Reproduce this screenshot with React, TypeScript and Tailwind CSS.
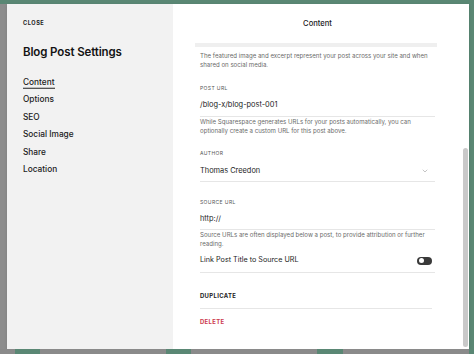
import { ChevronDown } from 'lucide-react'

const NAV = ['Content', 'Options', 'SEO', 'Social Image', 'Share', 'Location']

function Label({ text, className = '' }: { text: string; className?: string }) {
  return (
    <div className={`h-[8px] leading-[8px] text-[5px] tracking-[0.08em] uppercase text-[#555] ${className}`}>{text}</div>
  )
}

function Helper({ children }: { children: React.ReactNode }) {
  return <p className="text-[6.1px] leading-[9px] text-[#6a6a6a] pr-[4px]">{children}</p>
}

export default function App() {
  return (
    <div className="w-[474px] h-[354px] bg-[#5a8774] flex flex-col overflow-hidden" style={{ fontFamily: 'Inter, "Liberation Sans", sans-serif' }}>
      <div className="h-[4px] shrink-0" />
      <div className="flex h-[345px] shrink-0">
        <div className="w-[7px] bg-[#8d8d8d]" />
        {/* modal */}
        <div className="w-[462px] flex shadow-sm">
          {/* left nav */}
          <aside className="w-[166px] bg-[#f2f2f2] pl-[16px]">
            <div className="h-[36px] pt-[2px] flex items-center text-[5.6px] font-bold tracking-[0.1em] text-[#222]">CLOSE</div>
            <h1 className="mt-[5px] h-[14px] leading-[14px] text-[11.5px] font-semibold text-[#141414] tracking-[-0.01em]">Blog Post Settings</h1>
            <nav className="mt-[14px] flex flex-col">
              {NAV.map((n, i) => (
                <div key={n} className="h-[17.5px] flex items-center text-[8.3px] text-[#1c1c1c] font-medium">
                  {i === 0 ? (
                    <span className="leading-[11px] border-b-[1.5px] border-[#222] translate-y-[0.75px]">{n}</span>
                  ) : (
                    n
                  )}
                </div>
              ))}
            </nav>
          </aside>

          {/* right content */}
          <section className="flex-1 bg-white flex">
            <div className="flex-1">
              <div className="h-[36px] pt-[3px] flex items-center justify-center text-[7.6px] font-medium text-[#1a1a1a]">Content</div>
              <div className="mt-[3px] ml-[22px] w-[242px] h-[4px] bg-[#efefef]" />
              <div className="pl-[27px] w-[262px]">
                <div className="mt-[4px]">
                  <Helper>The featured image and excerpt represent your post across your site and when shared on social media.</Helper>
                </div>

                <Label text="Post URL" className="mt-[15px]" />
                <div className="mt-[2px] h-[23px] flex items-center border-b border-[#e6e6e6] text-[7.4px] text-[#1c1c1c]">/blog-x/blog-post-001</div>
                <Helper>While Squarespace generates URLs for your posts automatically, you can optionally create a custom URL for this post above.</Helper>

                <Label text="Author" className="mt-[14px]" />
                <div className="mt-[3px] h-[22px] flex items-center justify-between border-b border-[#e6e6e6] text-[7.4px] text-[#1c1c1c]">
                  <span>Thomas Creedon</span>
                  <ChevronDown size={8} strokeWidth={1.5} className="text-[#8a8a8a] mr-[6px]" />
                </div>

                <Label text="Source URL" className="mt-[16px]" />
                <div className="mt-[2px] h-[22px] flex items-center border-b border-[#e6e6e6] text-[7.4px] text-[#2a2a2a]">http://</div>
                <Helper>Source URLs are often displayed below a post, to provide attribution or further reading.</Helper>

                <div className="mt-[1px] h-[24px] flex items-center justify-between border-b border-[#e6e6e6] text-[7.2px] text-[#1c1c1c]">
                  <span>Link Post Title to Source URL</span>
                  <div className="w-[15px] h-[8px] rounded-full bg-[#3a3a3a] flex items-center pl-[1.5px] mr-[3px]">
                    <div className="w-[5px] h-[5px] rounded-full bg-white" />
                  </div>
                </div>

                <div className="mt-[12px] h-[24px] flex items-center border-b border-[#e6e6e6] mr-[3px] text-[5.9px] font-bold tracking-[0.06em] text-[#1c1c1c]">DUPLICATE</div>
                <div className="h-[26px] flex items-center text-[5.9px] font-bold tracking-[0.06em] text-[#cc3a4e]">DELETE</div>
              </div>
            </div>
            {/* scrollbar */}
            <div className="w-[7px] flex flex-col pt-[144px] pb-[2px] pr-[1px]">
              <div className="flex-1 w-[5px] ml-[1px] rounded-full bg-[#c9c9c9]" />
            </div>
          </section>
        </div>
        <div className="flex-1" />
      </div>
      <div className="flex-1 flex bg-[#8a8a8a]">
        <div className="w-[15px]" />
        <div className="w-[25px] bg-[#5a8774]" />
        <div className="w-[126px]" />
        <div className="w-[25px] bg-[#5a8774]" />
        <div className="w-[126px]" />
        <div className="w-[26px] bg-[#5a8774]" />
        <div className="flex-1" />
        <div className="w-[5px] bg-[#5a8774]" />
      </div>
    </div>
  )
}
